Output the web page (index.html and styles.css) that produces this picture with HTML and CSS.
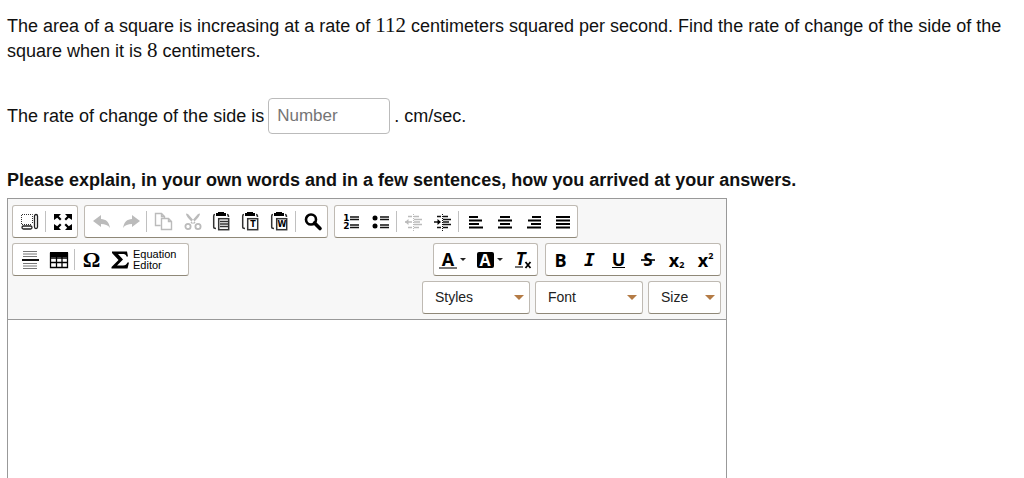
FILE: index.html
```html
<!DOCTYPE html>
<html lang="en">
<head>
<meta charset="utf-8">
<title>Related rates question</title>
<link rel="stylesheet" href="styles.css">
</head>
<body>
<main class="question">
  <p class="prompt">The area of a square is increasing at a rate of <span class="math">112</span> centimeters squared per second. Find the rate of change of the side of the square when it is <span class="math">8</span> centimeters.</p>
  <div class="answer">
    <label for="rate">The rate of change of the side is</label>
    <input id="rate" class="number" type="text" placeholder="Number">
    <span>. cm/sec.</span>
  </div>
  <p class="explain" id="explain">Please explain, in your own words and in a few sentences, how you arrived at your answers.</p>

  <section class="editor" aria-labelledby="explain">
    <div class="toolbar">
      <div class="row">
        <div class="group">
          <button class="tool" aria-label="Show blocks"><svg class="icon" viewBox="0 0 20 20"><path d="M1.500 12V2.500H12.500V12" fill="none" stroke="#333" stroke-dasharray="1 1"/><path d="M2 12.500H12" stroke="#333" stroke-dasharray="1 1"/><rect x="2" y="14" width="10" height="3" rx="1.500" fill="#fff" stroke="#222" stroke-width="1.300"/><rect x="14.500" y="2.500" width="3" height="14" rx="1.500" fill="#fff" stroke="#222" stroke-width="1.300"/></svg></button>
          <span class="sep"></span>
          <button class="tool" aria-label="Maximize"><svg class="icon" viewBox="0 0 20 20"><path d="M1 2h7L5.800 4.200 8.500 7 7 8.500 4.200 5.800 1 8zM19 2h-7l2.200 2.200L11.500 7 13 8.500l2.800-2.700L19 8zM1 18h7l-2.200-2.200L8.500 13 7 11.500l-2.800 2.700L1 12zM19 18h-7l2.200-2.200-2.700-2.800 1.500-1.500 2.800 2.700L19 12z"/></svg></button>
        </div>
        <div class="group">
          <button class="tool" aria-label="Undo"><svg class="icon muted" viewBox="0 0 20 20"><path d="M1 9l8-6v4c5 .2 8 3 9 9-2-3-5-4-9-4v3z"/></svg></button>
          <button class="tool" aria-label="Redo"><svg class="icon muted" viewBox="0 0 20 20"><path d="M19 9l-8-6v4c-5 .2-8 3-9 9 2-3 5-4 9-4v3z"/></svg></button>
          <span class="sep"></span>
          <button class="tool" aria-label="Copy"><svg class="icon muted" viewBox="0 0 20 20"><path d="M6.500 13.500h-5v-12h6l3 3v2M7.500 1.500v3h3M7.500 6.500h7l3 3v8h-10zM14.500 6.500v3h3" fill="none" stroke="#bbb" stroke-width="1.400"/></svg></button>
          <button class="tool" aria-label="Cut"><svg class="icon muted" viewBox="0 0 20 20"><path d="M3 1.500c0 2 2 5 8 10.500l1.500-1.500L5 2zM17 1.500c0 2-2 5-8 10.500l-1.500-1.500L15 2z"/><g fill="none" stroke="#bbb" stroke-width="1.800"><circle cx="5" cy="14.500" r="2.600"/><circle cx="15" cy="14.500" r="2.600"/></g></svg></button>
          <button class="tool" aria-label="Paste"><svg class="icon" viewBox="0 0 20 20"><path d="M6 0h6v1h2v3H4V1h2z"/><path d="M3 2.500Q1.700 2.500 1.700 4v11Q1.700 16.500 4 16.500M15 2.500Q16.500 2.500 16.500 5" fill="none" stroke="#333" stroke-width="1.500"/><rect x="6.700" y="6.700" width="10" height="11" fill="#fff" stroke="#333" stroke-width="1.500"/><path d="M8 9.500h8M8 12h8M8 14.500h8" stroke="#333" stroke-width="1.300"/></svg></button>
          <button class="tool" aria-label="Paste as plain text"><svg class="icon" viewBox="0 0 20 20"><path d="M6 0h6v1h2v3H4V1h2z"/><path d="M3 2.500Q1.700 2.500 1.700 4v11Q1.700 16.500 4 16.500M15 2.500Q16.500 2.500 16.500 5" fill="none" stroke="#333" stroke-width="1.500"/><rect x="6.700" y="6.700" width="10" height="11" fill="#fff" stroke="#333" stroke-width="1.500"/><text class="tiny" x="12" y="15">T</text></svg></button>
          <button class="tool" aria-label="Paste from Word"><svg class="icon" viewBox="0 0 20 20"><path d="M6 0h6v1h2v3H4V1h2z"/><path d="M3 2.500Q1.700 2.500 1.700 4v11Q1.700 16.500 4 16.500M15 2.500Q16.500 2.500 16.500 5" fill="none" stroke="#333" stroke-width="1.500"/><rect x="6.700" y="6.700" width="10" height="11" fill="#fff" stroke="#333" stroke-width="1.500"/><text class="tiny" x="12" y="15">W</text></svg></button>
          <span class="sep"></span>
          <button class="tool" aria-label="Find"><svg class="icon" viewBox="0 0 20 20"><circle cx="8" cy="7.500" r="5" fill="none" stroke="#000" stroke-width="2.600"/><path d="M11.500 11l5.500 5.500" stroke="#000" stroke-width="3.600" stroke-linecap="round"/></svg></button>
        </div>
        <div class="group">
          <button class="tool" aria-label="Numbered list"><svg class="icon" viewBox="0 0 20 20"><path d="M8 5h9M8 7.500h9M8 13h9M8 15.500h9" stroke="#111" stroke-width="1.500"/><text class="digit" x="4.500" y="9">1</text><text class="digit" x="4.500" y="17">2</text></svg></button>
          <button class="tool" aria-label="Bulleted list"><svg class="icon" viewBox="0 0 20 20"><circle cx="4" cy="6" r="2.500"/><circle cx="4" cy="14" r="2.500"/><path d="M9 5h9M9 7.500h9M9 13h9M9 15.500h9" stroke="#111" stroke-width="1.500"/></svg></button>
          <span class="sep"></span>
          <button class="tool" aria-label="Decrease indent"><svg class="icon muted" viewBox="0 0 20 20"><path d="M4 4.500h4M10 4.500h5M4 15.500h4M10 15.500h5M10 7.500h8M10 10h6M10 12.500h8M1 10h7" stroke="#bbb" stroke-width="1.400"/><path d="M9.500 2v17" stroke="#bbb" stroke-dasharray="1 1"/><path d="M1 10l3.500-3v6z"/></svg></button>
          <button class="tool" aria-label="Increase indent"><svg class="icon" viewBox="0 0 20 20"><path d="M4 4.500h4M10 4.500h5M4 15.500h4M10 15.500h5M10 7.500h8M10 10h6M10 12.500h8M1 10h6" stroke="#111" stroke-width="1.400"/><path d="M9.500 2v17" stroke="#111" stroke-dasharray="1 1"/><path d="M8 10L4.500 7v6z"/></svg></button>
          <span class="sep"></span>
          <button class="tool" aria-label="Align left"><svg class="icon" viewBox="0 0 20 20"><path d="M3 5h9M3 8.500h13M3 12h10M3 15.500h14" stroke="#000" stroke-width="2.200"/></svg></button>
          <button class="tool" aria-label="Center"><svg class="icon" viewBox="0 0 20 20"><path d="M5 5h10M3 8.500h14M5 12h10M3 15.500h14" stroke="#000" stroke-width="2.200"/></svg></button>
          <button class="tool" aria-label="Align right"><svg class="icon" viewBox="0 0 20 20"><path d="M8 5h9M4 8.500h13M7 12h10M3 15.500h14" stroke="#000" stroke-width="2.200"/></svg></button>
          <button class="tool" aria-label="Justify"><svg class="icon" viewBox="0 0 20 20"><path d="M3 5h14M3 8.500h14M3 12h14M3 15.500h14" stroke="#000" stroke-width="2.200"/></svg></button>
        </div>
      </div>

      <div class="row split">
        <div class="group">
          <button class="tool" aria-label="Horizontal line"><svg class="icon" viewBox="0 0 20 20"><path d="M3 1.500h14M3 4h14M3 6.500h14M3 13.500h14M3 16h14M3 18.500h14" stroke="#777"/><path d="M2 10h17" stroke="#111" stroke-width="2"/></svg></button>
          <button class="tool" aria-label="Table"><svg class="icon" viewBox="0 0 20 20"><path d="M1.500 3.500h17v14h-17zM1.500 8h17M1.500 12.500h17M7.500 7v10M13 7v10" fill="none" stroke="#000" stroke-width="1.300"/><path d="M1 2h18v5H1z"/></svg></button>
          <span class="sep"></span>
          <button class="tool symbol" aria-label="Special character">Ω</button>
          <button class="tool equation"><svg class="icon" viewBox="0 0 20 20"><path d="M2 1.500h15l1 5h-1.500C16 4.500 15 4 12.500 4H8l5 5.500-6 6h6c2.500 0 3.500-1 4.500-3H19l-1.500 6H1.500v-1.500l7-7L2 3z"/></svg><span class="eqlabel">Equation<br>Editor</span></button>
        </div>
        <div class="cluster">
          <div class="group">
            <button class="tool drop" aria-label="Text color"><span class="letter inked">A</span><span class="caret"></span></button>
            <button class="tool drop" aria-label="Background color"><span class="letter boxed">A</span><span class="caret"></span></button>
            <button class="tool" aria-label="Remove format"><svg class="icon" viewBox="0 0 20 20"><text class="slant" x="8" y="15">T</text><path d="M2 17h8" stroke="#444" stroke-width="1.500"/><path d="M12.500 12l5 6M17.500 12l-5 6" stroke="#000" stroke-width="1.800"/></svg></button>
          </div>
          <div class="group">
            <button class="tool letter" aria-label="Bold">B</button>
            <button class="tool letter italic" aria-label="Italic">I</button>
            <button class="tool letter" aria-label="Underline"><span class="under">U</span></button>
            <button class="tool" aria-label="Strikethrough"><svg class="icon" viewBox="0 0 20 20"><text class="struck" x="10" y="16">S</text><path d="M3 10h14" stroke="#000" stroke-width="1.600"/></svg></button>
            <button class="tool letter" aria-label="Subscript">x<span class="small low">2</span></button>
            <button class="tool letter" aria-label="Superscript">x<span class="small high">2</span></button>
          </div>
        </div>
      </div>

      <div class="row end">
        <div class="group combo"><select class="pick" aria-label="Styles"><option>Styles</option></select></div>
        <div class="group combo"><select class="pick" aria-label="Font"><option>Font</option></select></div>
        <div class="group combo short"><select class="pick" aria-label="Size"><option>Size</option></select></div>
      </div>
    </div>
    <textarea class="content" aria-labelledby="explain"></textarea>
  </section>
</main>
</body>
</html>
```
FILE: styles.css
```css
* { box-sizing: border-box; }

body {
  margin: 0;
  background: #fff;
  color: #111;
  font: 18px/25px "Liberation Sans", Arial, sans-serif;
}

.question {
  display: flex;
  flex-direction: column;
  min-height: 100vh;
  padding: 14px 7px 0;
}

p { margin: 0; }

.math {
  font-family: "Liberation Serif", "Times New Roman", serif;
  font-size: 21px;
  line-height: 1;
}

.answer {
  display: flex;
  align-items: center;
  gap: 4px;
  margin: 34px 0;
}

.number {
  width: 122px;
  height: 36px;
  padding: 0 8px;
  border: 1px solid #bbb;
  border-radius: 4px;
  font: 17px "Liberation Sans", Arial, sans-serif;
}

.number::placeholder { color: #757575; }

.explain {
  margin-bottom: 5px;
  font-weight: bold;
}

.editor {
  display: flex;
  flex: 1;
  flex-direction: column;
  width: 720px;
  max-width: 100%;
  border: 1px solid #999;
  border-bottom: 0;
}

.toolbar {
  display: flex;
  flex-direction: column;
  gap: 5px;
  padding: 6px 5px 5px 4px;
  border-bottom: 1px solid #999;
  background: #f7f7f7;
}

.row { display: flex; gap: 6px; }
.cluster { display: flex; gap: 7px; }
.split { justify-content: space-between; }
.end { justify-content: flex-end; gap: 5px; }

.group {
  display: flex;
  align-items: center;
  height: 33px;
  padding-left: 2px;
  border: 1px solid #bfbab3;
  border-bottom-color: #8f8878;
  border-radius: 3px;
  background: #fff;
}

.cluster .group { padding-left: 0; }

.tool {
  display: flex;
  align-items: center;
  justify-content: center;
  width: 29px;
  height: 31px;
  padding: 0;
  border: 0;
  background: none;
  color: #000;
}

.sep {
  width: 1px;
  height: 21px;
  margin: 0 2px 0 1px;
  background: #c0c0c0;
}

.icon { width: 20px; height: 20px; fill: #000; overflow: visible; }
.muted { fill: #bbb; }

.tiny { font: bold 8px "DejaVu Sans", sans-serif; text-anchor: middle; }
.digit { font: bold 9px "DejaVu Sans", sans-serif; text-anchor: middle; }
.slant { font: italic bold 18px "DejaVu Sans Mono", monospace; text-anchor: middle; }
.struck { font: bold 17px "Open Sans", sans-serif; text-anchor: middle; }

.symbol { font: bold 22px "Liberation Serif", serif; }

.equation { width: 82px; justify-content: flex-start; padding-left: 4px; gap: 3px; }
.eqlabel { font: 11px/11px "Liberation Sans", Arial, sans-serif; text-align: left; }

.letter { font: bold 18px/20px "Open Sans", sans-serif; }
.italic { font: italic bold 18px/20px "DejaVu Sans Mono", monospace; }
.under { border-bottom: 1px solid #000; line-height: 16px; }
.small { font-size: 9px; }
.low { align-self: flex-end; }
.high { align-self: flex-start; padding-top: 2px; }

.drop { width: 37px; gap: 3px; }
.inked { width: 18px; border-bottom: 2px solid #777; line-height: 16px; }
.boxed {
  width: 17px;
  border-radius: 2px;
  background: #000;
  color: #fff;
  font-size: 16px;
  line-height: 16px;
}
.caret {
  border: 3px solid transparent;
  border-top-color: #222;
  border-bottom: 0;
}

.combo { width: 108px; padding: 0; }
.short { width: 73px; }

.pick {
  flex: 1;
  min-width: 0;
  height: 31px;
  padding: 0 0 2px 12px;
  border: 0;
  background: none;
  appearance: none;
  color: #222;
  font: 14px "Liberation Sans", Arial, sans-serif;
}

.combo::after {
  content: "";
  margin-right: 5px;
  border: 5px solid transparent;
  border-top-color: #b47b45;
  border-bottom: 0;
}

.content {
  flex: 1;
  width: 100%;
  padding: 20px;
  border: 0;
  outline: 0;
  resize: none;
  font: inherit;
}
```
